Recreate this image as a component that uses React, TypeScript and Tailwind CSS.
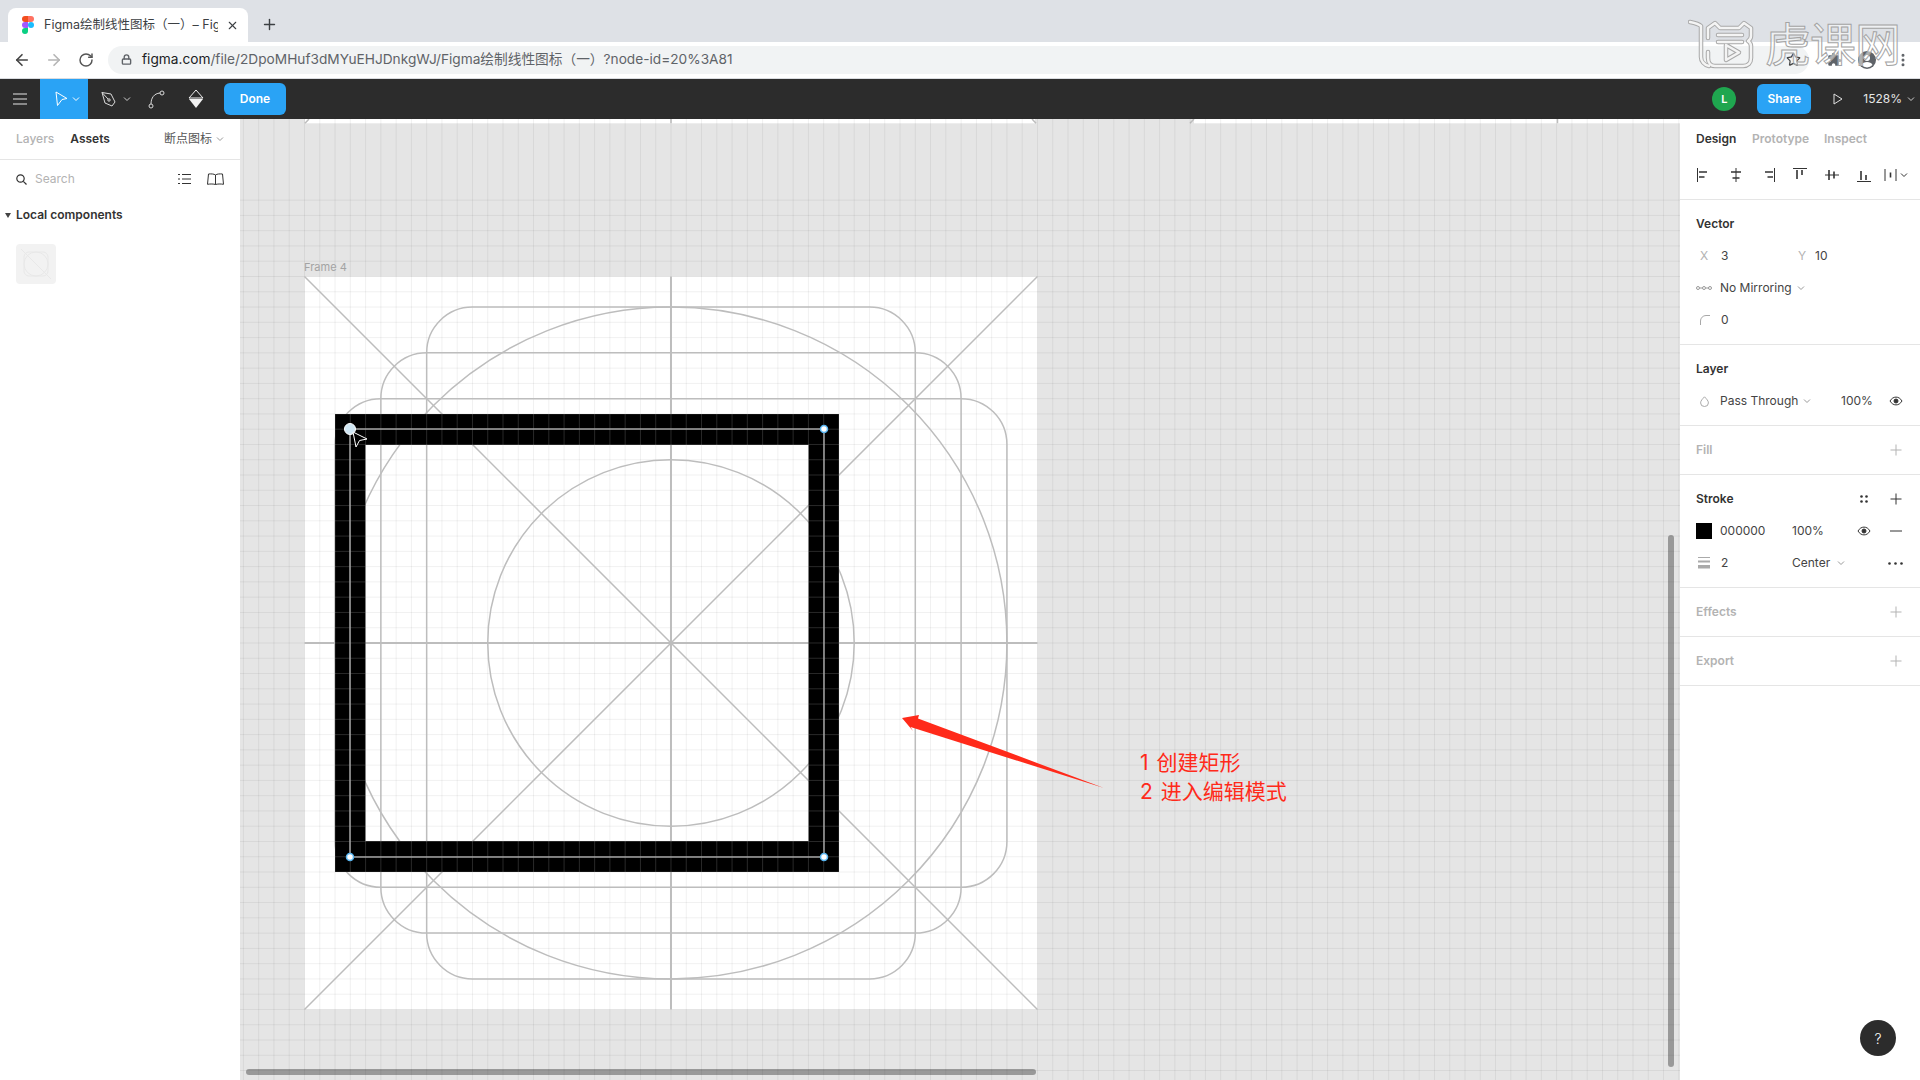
import { ArrowLeft, ArrowRight, EllipsisVertical, Lock, Plus, RotateCw, Star, X } from 'lucide-react'

const UNIT = 15.27
const FRAME_X = 304.5
const FRAME_Y = 276.5
const steps = Array.from({ length: 100 }, (_, i) => i - 5)

function Chevron({ className = 'text-[#9a9a9a]' }: { className?: string }) {
  return (
    <svg className={className} width="8" height="6" viewBox="0 0 8 6" fill="none" stroke="currentColor">
      <path d="M1 1.5 4 4.5 7 1.5" />
    </svg>
  )
}

function AlignIcon({ d, bars }: { d: string; bars: string }) {
  return (
    <svg width="14" height="14" viewBox="0 0 14 14" fill="none" stroke="#333">
      <path d={d} strokeWidth="1" />
      <path d={bars} strokeWidth="1.6" />
    </svg>
  )
}

function Eye() {
  return (
    <svg width="14" height="10" viewBox="0 0 14 10" fill="none" stroke="#333" strokeWidth="1">
      <path d="M1 5c1.6-2.6 3.6-3.9 6-3.9s4.4 1.3 6 3.9c-1.6 2.6-3.6 3.9-6 3.9S2.600 7.600 1 5Z" />
      <circle cx="7" cy="5" r="2" fill="#333" />
    </svg>
  )
}

function Heading({ text, muted, children }: { text: string; muted?: boolean; children?: React.ReactNode }) {
  return (
    <div className="flex h-6 items-center justify-between pl-4 pr-[18px]">
      <span className={`text-[12px] font-semibold ${muted ? 'text-[#b3b3b3]' : 'text-[#333]'}`}>{text}</span>
      <div className="flex items-center">{children}</div>
    </div>
  )
}

function AddButton({ dark }: { dark?: boolean }) {
  return (
    <svg width="12" height="12" viewBox="0 0 12 12" stroke={dark ? '#333' : '#b3b3b3'} strokeWidth="1">
      <path d="M6 .5v11M.5 6h11" />
    </svg>
  )
}

function RightPanel() {
  return (
    <aside className="flex w-60 shrink-0 flex-col bg-white text-[12px] text-[#444]">
      <section className="h-[81px] border-b border-[#e5e5e5]">
        <div className="flex h-[39px] items-center pl-4 font-semibold">
          <span className="w-[56px] text-[#333]">Design</span>
          <span className="w-[72px] text-[#b3b3b3]">Prototype</span>
          <span className="text-[#b3b3b3]">Inspect</span>
        </div>
        <div className="flex h-[34px] items-center pl-2">
          <span className="flex w-8 justify-center"><AlignIcon d="M.5 0v14" bars="M2 4h8M2 9h5.500" /></span>
          <span className="flex w-8 justify-center"><AlignIcon d="M7 0v14" bars="M2 4h10M3.500 10h7" /></span>
          <span className="flex w-8 justify-center"><AlignIcon d="M13.500 0v14" bars="M4 4h8M6.500 9h5.500" /></span>
          <span className="flex w-8 justify-center"><AlignIcon d="M0 .5h14" bars="M4 2v9M9 2v5" /></span>
          <span className="flex w-8 justify-center"><AlignIcon d="M0 7h14" bars="M4 2v10M9 3.500v7" /></span>
          <span className="flex w-8 justify-center"><AlignIcon d="M0 13.500h14" bars="M4 3v9M9 7v5" /></span>
          <span className="flex items-center gap-[2px] pl-[4px]">
            <AlignIcon d="M1 1v12M12 1v12" bars="M6.500 4.500v5" />
            <Chevron className="text-[#333]" />
          </span>
        </div>
      </section>

      <section className="h-[145px] border-b border-[#e5e5e5] pt-3">
        <Heading text="Vector" />
        <div className="mt-1 flex h-8 items-center">
          <span className="w-[41px] pl-[20px] text-[#b3b3b3]">X</span>
          <span className="w-[77px]">3</span>
          <span className="w-[17px] text-[#b3b3b3]">Y</span>
          <span>10</span>
        </div>
        <div className="flex h-8 items-center">
          <span className="flex w-[40px] pl-4">
            <svg width="16" height="6" viewBox="0 0 16 6" fill="none" stroke="#9a9a9a">
              <path d="M3.500 3h3M10 3h3" />
              <circle cx="2" cy="3" r="1.500" />
              <circle cx="8" cy="3" r="1.500" />
              <circle cx="14" cy="3" r="1.500" />
            </svg>
          </span>
          <span className="mr-[5px]">No Mirroring</span>
          <Chevron />
        </div>
        <div className="flex h-8 items-center">
          <span className="flex w-[41px] pl-[20px]">
            <svg width="10" height="10" viewBox="0 0 10 10" fill="none" stroke="#a8a8a8">
              <path d="M.5 10V6A5.500 5.500 0 0 1 6 .5h4" />
            </svg>
          </span>
          <span>0</span>
        </div>
      </section>

      <section className="h-[81px] border-b border-[#e5e5e5] pt-3">
        <Heading text="Layer" />
        <div className="mt-1 flex h-8 items-center">
          <span className="flex w-[40px] pl-[20px]">
            <svg width="9" height="11" viewBox="0 0 9 11" fill="none" stroke="#a8a8a8">
              <path d="M4.500 .8C6.500 3 8.400 4.700 8.400 6.900a3.900 3.600 0 0 1-7.800 0C.6 4.700 2.500 3 4.500 .8Z" />
            </svg>
          </span>
          <span className="w-[83px] whitespace-nowrap">Pass Through</span>
          <Chevron />
          <span className="ml-[30px] w-[48px]">100%</span>
          <Eye />
        </div>
      </section>

      <section className="h-[49px] border-b border-[#e5e5e5] pt-3">
        <Heading text="Fill" muted><AddButton /></Heading>
      </section>

      <section className="h-[113px] border-b border-[#e5e5e5] pt-3">
        <Heading text="Stroke">
          <svg className="mr-[22px]" width="8" height="8" viewBox="0 0 8 8" fill="#333">
            <circle cx="1.500" cy="1.500" r="1.300" />
            <circle cx="6.500" cy="1.500" r="1.300" />
            <circle cx="1.500" cy="6.500" r="1.300" />
            <circle cx="6.500" cy="6.500" r="1.300" />
          </svg>
          <AddButton dark />
        </Heading>
        <div className="mt-1 flex h-8 items-center pl-4">
          <span className="mr-2 h-4 w-4 bg-black" />
          <span className="w-[72px]">000000</span>
          <span className="w-[65px]">100%</span>
          <Eye />
          <svg className="ml-[19px]" width="12" height="2" viewBox="0 0 12 2" stroke="#333"><path d="M0 1h12" /></svg>
        </div>
        <div className="flex h-8 items-center">
          <span className="flex w-[41px] pl-[18px]">
            <svg width="12" height="12" viewBox="0 0 12 12" fill="#aaa">
              <rect y="0" width="12" height="1" />
              <rect y="3.500" width="12" height="2" />
              <rect y="8" width="12" height="3.500" />
            </svg>
          </span>
          <span className="w-[71px]">2</span>
          <span className="mr-[7px]">Center</span>
          <Chevron />
          <svg className="ml-[43px]" width="15" height="3" viewBox="0 0 15 3" fill="#333">
            <circle cx="1.500" cy="1.500" r="1.300" />
            <circle cx="7.500" cy="1.500" r="1.300" />
            <circle cx="13.500" cy="1.500" r="1.300" />
          </svg>
        </div>
      </section>

      <section className="h-[49px] border-b border-[#e5e5e5] pt-3">
        <Heading text="Effects" muted><AddButton /></Heading>
      </section>
      <section className="h-[49px] border-b border-[#e5e5e5] pt-3">
        <Heading text="Export" muted><AddButton /></Heading>
      </section>
    </aside>
  )
}

function LeftPanel() {
  return (
    <aside className="flex w-60 shrink-0 flex-col bg-white text-[12px]">
      <div className="flex h-[41px] items-center justify-between border-b border-[#e5e5e5] pl-4 pr-[16px] font-medium">
        <div className="flex gap-4">
          <span className="text-[#b3b3b3]">Layers</span>
          <span className="font-semibold text-[#333]">Assets</span>
        </div>
        <div className="flex items-center gap-[4px] text-[#555]">
          <span className="font-normal">断点图标</span>
          <Chevron />
        </div>
      </div>
      <div className="flex h-[38px] items-center pl-4 pr-4">
        <svg width="11" height="11" viewBox="0 0 11 11" fill="none" stroke="#333" strokeWidth="1.200">
          <circle cx="4.500" cy="4.500" r="3.700" />
          <path d="m7.300 7.300 3.200 3.200" />
        </svg>
        <span className="ml-2 flex-1 text-[#b3b3b3]">Search</span>
        <svg className="mr-4" width="13" height="12" viewBox="0 0 13 12" fill="none" stroke="#333">
          <path d="M4 1.500h9M4 6h9M4 10.500h9M0 1.500h2M0 6h2M0 10.500h2" />
        </svg>
        <svg width="17" height="12" viewBox="0 0 17 12" fill="none" stroke="#333">
          <path d="M8.500 2C7 .8 4 .8 1.500 1L.5 11.300c3-.5 6-.4 8 .2 2-.6 5-.7 8-.2L15.500 1C13 .8 10 .8 8.500 2Zm0 0v9.500" />
        </svg>
      </div>
      <div className="flex h-[34px] items-center pl-[5px]">
        <svg width="6" height="5" viewBox="0 0 6 5" fill="#444"><path d="M0 0h6L3 5Z" /></svg>
        <span className="ml-[5px] font-semibold text-[#333]">Local components</span>
      </div>
      <div className="ml-4 mt-3 h-10 w-10 rounded-sm bg-[#f2f2f2]">
        <svg width="40" height="40" viewBox="0 0 40 40" fill="none" stroke="#e8e8e8">
          <circle cx="20" cy="20" r="12" />
          <rect x="8" y="8" width="24" height="24" rx="5" />
          <path d="M5 5 35 35" />
        </svg>
      </div>
    </aside>
  )
}

function Canvas() {
  const gridX = steps.map(i => FRAME_X + i * UNIT)
  const gridY = steps.map(i => FRAME_Y + i * UNIT)
  const u = (n: number) => n * UNIT
  return (
    <main className="relative min-w-0 flex-1 overflow-hidden bg-[#e5e5e5]">
      <svg className="block h-full w-full" viewBox="240 119 1440 961" fill="none">
        <defs>
          <clipPath id="stroke-clip">
            <path clipRule="evenodd" d="M335 414h504v458H335ZM365.500 445v396h443V445Z" />
          </clipPath>
        </defs>

        {/* bottom edge of the frame above */}
        <rect x="305" y="119" width="730" height="4.300" fill="#fff" />
        <rect x="1194" y="119" width="486" height="4.300" fill="#fff" />
        <path d="M305 123.300 309 119M1032 119l4 4.300M1190 123.300l4-4.300M671 119v4.300M1557.500 119v4.300" stroke="#bdbdbd" strokeWidth="1.500" />

        <rect x={FRAME_X} y={FRAME_Y} width="733" height="733" fill="#fff" />

        <g stroke="#000" strokeOpacity="0.06">
          {gridX.map(x => <path key={x} d={`M${x} 119V1080`} />)}
          {gridY.map(y => <path key={y} d={`M240 ${y}H1680`} />)}
        </g>

        <g transform={`translate(${FRAME_X} ${FRAME_Y})`} stroke="#bdbdbd" strokeWidth="1.500">
          <path d={`M0 0 ${u(48)} ${u(48)}M${u(48)} 0 0 ${u(48)}`} />
          <path d={`M${u(24)} 0V${u(48)}M0 ${u(24)}H${u(48)}`} strokeWidth="2" />
          <circle cx={u(24)} cy={u(24)} r={u(22)} />
          <circle cx={u(24)} cy={u(24)} r={u(12)} />
          <rect x={u(8)} y={u(2)} width={u(32)} height={u(44)} rx={u(3)} />
          <rect x={u(5)} y={u(5)} width={u(38)} height={u(38)} rx={u(3)} />
          <rect x={u(2)} y={u(8)} width={u(44)} height={u(32)} rx={u(3)} />
        </g>

        {/* the vector stroke with the pixel grid showing over it */}
        <path fillRule="evenodd" fill="#000" d="M335 414h504v458H335ZM365.500 445v396h443V445Z" />
        <g clipPath="url(#stroke-clip)" stroke="#fff" strokeOpacity="0.16">
          {gridX.map(x => <path key={x} d={`M${x} 400V880`} />)}
          {gridY.map(y => <path key={y} d={`M320 ${y}H850`} />)}
        </g>
        <rect x="350" y="429" width="474" height="428" stroke="#a3a3a3" strokeWidth="1.500" />

        <circle cx="824" cy="429" r="3.500" fill="#fff" stroke="#57b4f0" strokeWidth="1.500" />
        <circle cx="350" cy="857" r="3.500" fill="#fff" stroke="#57b4f0" strokeWidth="1.500" />
        <circle cx="824" cy="857" r="3.500" fill="#fff" stroke="#57b4f0" strokeWidth="1.500" />
        <circle cx="350" cy="429" r="5.500" fill="#cfe6f3" stroke="#fff" />
        <path d="M353 432 367 439 359.500 440.500 356 447Z" fill="#000" stroke="#fff" />

        {/* annotation arrow */}
        <path d="M902 718 919 715 918 718.500 1104 788 910.500 727 913 731Z" fill="#ff2a1a" />

        {/* scroll bars */}
        <rect x="1668" y="535" width="6" height="532" rx="3" fill="#000" fillOpacity="0.33" />
        <rect x="246" y="1069" width="790" height="6" rx="3" fill="#000" fillOpacity="0.33" />
      </svg>

      <span className="absolute left-[64px] top-[140px] text-[11px] text-[#a3a3a3]">Frame 4</span>
      <div className="absolute left-[900px] top-[629px] text-[21px] leading-[29px] text-[#ff2a1a] [word-spacing:2px]">
        <div>1 创建矩形</div>
        <div>2 进入编辑模式</div>
      </div>
    </main>
  )
}

function Watermark() {
  return (
    <div className="pointer-events-none absolute left-[1688px] top-[18px] flex h-[52px] items-center">
      <svg width="76" height="52" viewBox="0 0 76 52" fill="none" strokeLinecap="round" strokeLinejoin="round">
        <g stroke="#a9a9a9" strokeWidth="4.500">
          <path d="M2 4c5 1 9 2 11 4v31c0 4 3 8 8 9" />
          <path d="M20 20V10l7-5 5 5h19l5-5 7 5v8c0 3-3 5-3 5s3 2 3 5v12c0 5-3 8-8 8H27c-4 0-7-3-7-8V34" />
          <path d="M30 17h24M30 24h24M38 27l13 7.500-13 7.500Z" />
        </g>
        <g stroke="#f4f4f4" strokeWidth="2.500">
          <path d="M2 4c5 1 9 2 11 4v31c0 4 3 8 8 9" />
          <path d="M20 20V10l7-5 5 5h19l5-5 7 5v8c0 3-3 5-3 5s3 2 3 5v12c0 5-3 8-8 8H27c-4 0-7-3-7-8V34" />
          <path d="M30 17h24M30 24h24M38 27l13 7.500-13 7.500Z" />
        </g>
      </svg>
      <span className="ml-[1px] whitespace-nowrap text-[46px] leading-none tracking-[-1px] text-white/50 [-webkit-text-stroke:1px_#a4a4a4]">
        虎课网
      </span>
    </div>
  )
}

export default function App() {
  return (
    <div className="relative flex h-screen w-[1920px] flex-col overflow-hidden bg-white [font-family:Inter,'Noto_Sans_CJK_SC',sans-serif]">
      {/* browser tabs */}
      <div className="flex h-[42px] shrink-0 items-end bg-[#dee1e6] pl-2">
        <div className="flex h-[34px] w-[240px] items-center rounded-t-lg bg-white pl-[14px] text-[#3c4043]">
          <svg width="12" height="18" viewBox="0 0 12 18">
            <path d="M0 3a3 3 0 0 1 3-3h3v6H3a3 3 0 0 1-3-3Z" fill="#f24e1e" />
            <path d="M6 0h3a3 3 0 0 1 0 6H6Z" fill="#ff7262" />
            <path d="M0 9a3 3 0 0 1 3-3h3v6H3a3 3 0 0 1-3-3Z" fill="#a259ff" />
            <circle cx="9" cy="9" r="3" fill="#1abcfe" />
            <path d="M0 15a3 3 0 0 1 3-3h3v3a3 3 0 0 1-6 0Z" fill="#0acf83" />
          </svg>
          <span className="ml-[10px] w-[174px] overflow-hidden whitespace-nowrap text-[12.500px]">Figma绘制线性图标（一）– Figma</span>
          <X className="ml-[8px]" size={13} strokeWidth={2} />
        </div>
        <Plus className="mb-[9px] ml-[13px] text-[#3c4043]" size={17} strokeWidth={2} />
      </div>

      {/* address bar */}
      <div className="flex h-[37px] shrink-0 items-center border-b border-[#dadce0] bg-white pb-[1px] text-[#5f6368]">
        <ArrowLeft className="ml-[13px] text-[#444]" size={18} strokeWidth={2.200} />
        <ArrowRight className="ml-[14px] text-[#b5b5b5]" size={18} strokeWidth={2.200} />
        <RotateCw className="ml-[15px] text-[#555]" size={16} strokeWidth={2.200} />
        <div className="ml-[14px] flex h-[28px] w-[1701px] items-center rounded-full bg-[#f1f3f4] pl-[13px]">
          <Lock size={11} strokeWidth={3} className="text-[#5f6368]" />
          <span className="ml-[10px] whitespace-nowrap text-[13.700px] text-[#5f6368]">
            <span className="text-[#202124]">figma.com</span>/file/2DpoMHuf3dMYuEHJDnkgWJ/Figma绘制线性图标（一）?node-id=20%3A81
          </span>
          <span className="flex-1" />
          <Star className="mr-[8px] text-[#444]" size={15} strokeWidth={2} />
        </div>
        <svg className="ml-[18px]" width="15" height="15" viewBox="0 0 24 24" fill="#5f6368">
          <path d="M20.500 11H19V7a2 2 0 0 0-2-2h-4V3.500a2.500 2.500 0 0 0-5 0V5H4a2 2 0 0 0-2 2v3.800h1.500a2.700 2.700 0 0 1 0 5.400H2V20a2 2 0 0 0 2 2h3.800v-1.500a2.700 2.700 0 0 1 5.400 0V22H17a2 2 0 0 0 2-2v-4h1.500a2.500 2.500 0 0 0 0-5Z" />
        </svg>
        <svg className="ml-[16px]" width="18" height="18" viewBox="0 0 18 18">
          <circle cx="9" cy="9" r="9" fill="#5f6368" />
          <circle cx="9" cy="7" r="3" fill="#fff" />
          <path d="M3.500 14c1-2.300 3-3 5.500-3s4.500.7 5.500 3a7.500 7.500 0 0 1-11 0Z" fill="#fff" />
        </svg>
        <EllipsisVertical className="ml-[19px]" size={16} strokeWidth={2.500} />
      </div>

      {/* figma toolbar */}
      <header className="flex h-10 shrink-0 items-center bg-[#2c2c2c] text-[12px] text-white">
        <div className="flex w-10 justify-center">
          <svg width="14" height="12" viewBox="0 0 14 12" stroke="#e6e6e6"><path d="M0 1h14M0 6h14M0 11h14" /></svg>
        </div>
        <div className="flex h-full w-12 items-center justify-center gap-[4px] bg-[#2aa3f5] pl-[7px]">
          <svg width="13" height="16" viewBox="0 0 13 16" fill="none" stroke="#fff"><path d="M1 1 12 7.500 7 8.500 2.500 14.500Z" /></svg>
          <Chevron className="text-white" />
        </div>
        <div className="ml-[13px] flex items-center gap-[6px]">
          <svg width="16" height="17" viewBox="0 0 16 17" fill="none" stroke="#d9d9d9">
            <path d="M1 1.500 10 3l4 8-3 4-7-3L1 1.500Zm0 0L7 8" />
            <circle cx="8" cy="9" r="1.200" />
          </svg>
          <Chevron className="text-[#cfcfcf]" />
        </div>
        <svg className="ml-[17px]" width="17" height="19" viewBox="0 0 17 19" fill="none" stroke="#d9d9d9">
          <circle cx="14" cy="3" r="2" />
          <circle cx="3" cy="16" r="2" />
          <path d="M12 3C6 3.500 3 8 3 14" />
        </svg>
        <svg className="ml-[23px]" width="16" height="20" viewBox="0 0 16 20">
          <path d="M8 1 15 9H1Z" fill="#2c2c2c" stroke="#f2f2f2" />
          <path d="M1 10h14l-7 9Z" fill="#f2f2f2" />
        </svg>
        <button className="ml-[20px] flex h-8 w-[62px] items-center justify-center rounded-md bg-[#2aa3f5] font-semibold">Done</button>

        <span className="flex-1" />
        <span className="flex h-6 w-6 items-center justify-center rounded-full bg-[#1fa64f] text-[11px] font-semibold">L</span>
        <button className="ml-[21px] flex h-[30px] w-[54px] items-center justify-center rounded-md bg-[#2aa3f5] font-semibold">Share</button>
        <svg className="ml-[22px]" width="10" height="12" viewBox="0 0 10 12" fill="none" stroke="#e0e0e0"><path d="M1 1 9 6 1 11Z" /></svg>
        <span className="ml-[20px] text-[#e6e6e6]">1528%</span>
        <Chevron className="ml-[5px] mr-[5px] text-[#cfcfcf]" />
      </header>

      <div className="flex min-h-0 flex-1">
        <LeftPanel />
        <Canvas />
        <RightPanel />
      </div>

      <Watermark />
      <button className="absolute left-[1860px] top-[1020px] flex h-9 w-9 items-center justify-center rounded-full bg-[#2c2c2c] text-[14px] font-light text-white">?</button>
    </div>
  )
}
